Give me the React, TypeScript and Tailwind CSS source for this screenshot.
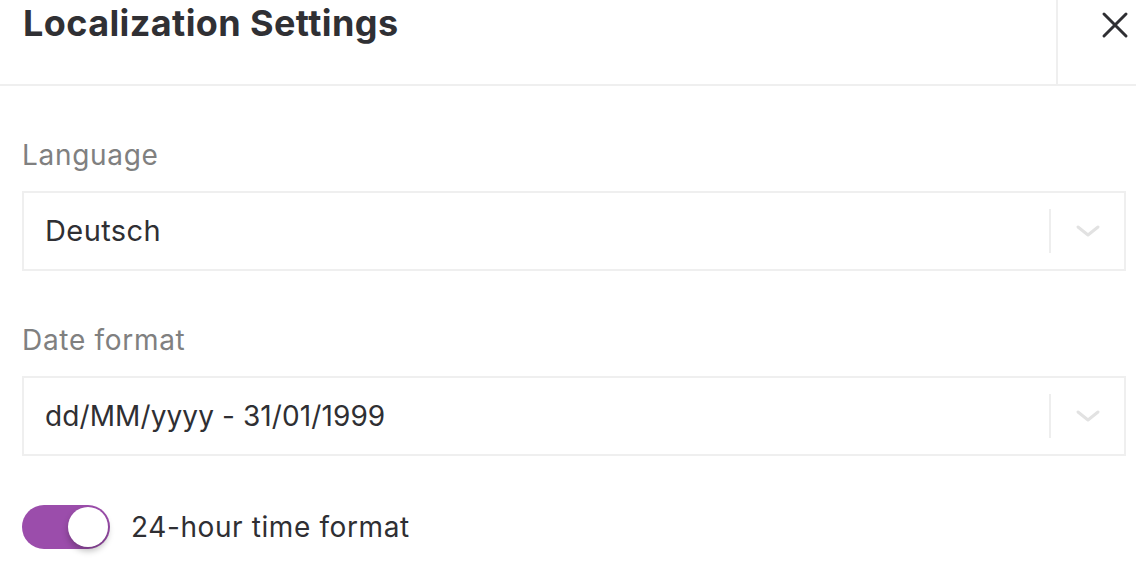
import React, { useState } from 'react';

const font = { fontFamily: 'Inter, "Noto Sans", sans-serif' };

const Chevron = () => (
  <svg width="26" height="14" viewBox="0 0 26 14" fill="none">
    <path d="M3 3l10 8 10-8" stroke="#e2e2e2" strokeWidth="3" strokeLinecap="round" strokeLinejoin="round" />
  </svg>
);

const SelectField = ({ label, value, wide }: { label: string; value: string; wide?: boolean }) => (
  <div className="flex flex-col">
    <label className="text-[28px] leading-[32px] tracking-[0.7px] text-[#808080] mb-[20px]">{label}</label>
    <div className="flex items-center h-[80px] border-2 border-[#efefef] bg-white">
      <span
        className={`flex-1 pl-[21px] text-[#2f2f33] ${wide ? 'text-[29px] tracking-[0.4px]' : 'text-[28px] tracking-[0.1px]'}`}
      >
        {value}
      </span>
      <div className="w-[2px] h-[44px] bg-[#eeeeee]" />
      <div className="w-[73px] flex items-center justify-center">
        <Chevron />
      </div>
    </div>
  </div>
);

export default function App() {
  const [on, setOn] = useState(true);
  return (
    <div className="w-[1136px] h-[582px] bg-white overflow-hidden" style={font}>
      <div className="flex h-[86px] border-b-2 border-[#efefef]">
        <h1 className="flex-1 pl-[23px] pt-[1px] text-[36px] tracking-[0.4px] font-bold text-[#303034] leading-[44px]">
          Localization Settings
        </h1>
        <div className="w-[2px] bg-[#efefef]" />
        <button className="w-[78px] flex items-start justify-end pr-[7px] pt-[11px]">
          <svg width="28" height="28" viewBox="0 0 28 28" fill="none">
            <path d="M3 3l22 22M25 3L3 25" stroke="#2f2f33" strokeWidth="3" strokeLinecap="round" />
          </svg>
        </button>
      </div>
      <div className="pl-[22px] pr-[10px] pt-[53px] flex flex-col">
        <SelectField label="Language" value="Deutsch" wide />
        <div className="h-[53px]" />
        <SelectField label="Date format" value="dd/MM/yyyy - 31/01/1999" />
        <div className="flex items-center gap-[21px] mt-[49px]">
          <button
            onClick={() => setOn(!on)}
            className={`relative w-[88px] h-[44px] rounded-full ${on ? 'bg-[#9b4dab]' : 'bg-[#ddd]'}`}
          >
            <span
              className={`absolute top-[2px] w-[40px] h-[40px] rounded-full bg-white shadow-[0_4px_6px_rgba(0,0,0,0.25)] ${on ? 'left-[46px]' : 'left-[2px]'}`}
            />
          </button>
          <span className="text-[28px] tracking-[0.6px] text-[#2f2f33]">24-hour time format</span>
        </div>
      </div>
    </div>
  );
}
